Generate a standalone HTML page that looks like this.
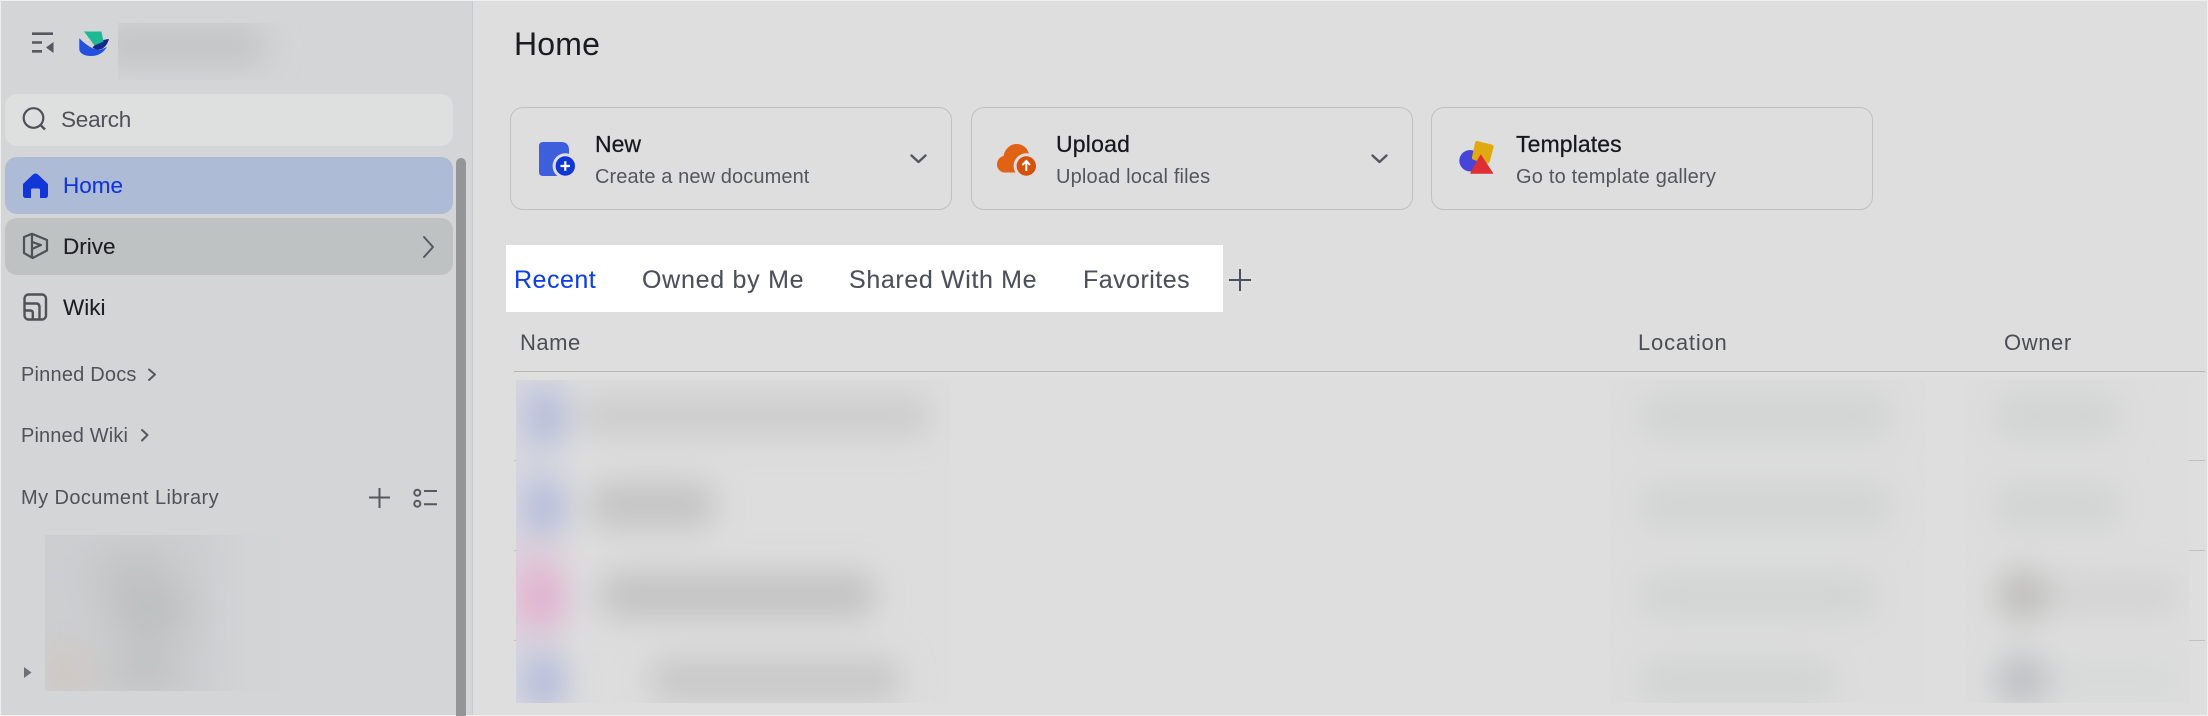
<!DOCTYPE html>
<html lang="en">
<head>
<meta charset="utf-8">
<title>Home</title>
<style>
html,body{margin:0;padding:0;width:2208px;height:716px;overflow:hidden;background:#dedede}
body{position:relative;font-family:"Liberation Sans",sans-serif}
div,span{position:absolute;box-sizing:border-box}
.t{white-space:nowrap;line-height:1}
.side{left:1px;top:1px;width:472px;height:714px;background:#d3d5d7;border-right:1px solid #c8cacc}
.box{left:5px;width:448px;border-radius:12px}
.nav{font-size:22.5px;color:#1c1e22;-webkit-text-stroke:.1px currentColor}
.small{font-size:20px;color:#4f5259}
.card{top:107px;height:103px;width:442px;border:1.5px solid #bfc0c1;border-radius:13px}
.ct{font-size:23px;color:#17181b;-webkit-text-stroke:.25px currentColor}
.cs{font-size:20px;color:#53565c}
.tab{top:268px;font-size:25px;color:#4b505b;-webkit-text-stroke:.1px currentColor}
.th{top:332px;font-size:22px;color:#4b4e55}
.sep{height:1px;background:#c0c1c2}
svg{position:absolute;left:0;top:0}
</style>
</head>
<body>
<div class="side"></div>
<div style="left:0;top:0;width:2208px;height:1px;background:#efefef"></div>
<div style="left:0;top:715px;width:2208px;height:1px;background:#efefef"></div>
<div style="left:0;top:0;width:1px;height:716px;background:#efefef"></div>
<div style="left:2207px;top:0;width:1px;height:716px;background:#efefef"></div>

<div class="box" style="top:94px;height:52px;background:#dedfdf"></div>
<div class="box" style="top:157px;height:57px;background:#aebbd6"></div>
<div class="box" style="top:218px;height:57px;background:#bec2c2"></div>
<div style="left:456px;top:158px;width:10px;height:558px;background:#949596;border-radius:5px 5px 0 0"></div>

<div style="left:506px;top:245px;width:717px;height:67px;background:#fff"></div>

<div class="card" style="left:510px"></div>
<div class="card" style="left:971px"></div>
<div class="card" style="left:1431px"></div>

<div class="sep" style="left:514px;top:371px;width:1691px;background:#b5b6b7"></div>
<div class="sep" style="left:514px;top:460px;width:2px"></div>
<div class="sep" style="left:514px;top:550px;width:2px"></div>
<div class="sep" style="left:514px;top:640px;width:2px"></div>

<svg width="2208" height="716" viewBox="0 0 2208 716" xmlns="http://www.w3.org/2000/svg">
<defs>
<filter id="b" x="-40%" y="-60%" width="180%" height="220%"><feGaussianBlur stdDeviation="18"/></filter>
<filter id="b2" x="-40%" y="-80%" width="180%" height="260%"><feGaussianBlur stdDeviation="16"/></filter>
<clipPath id="c1"><rect x="516" y="380" width="434" height="323"/></clipPath>
<clipPath id="c2"><rect x="1610" y="380" width="315" height="323"/></clipPath>
<clipPath id="c3"><rect x="1965" y="380" width="224" height="323"/></clipPath>
<clipPath id="c4"><rect x="118" y="23" width="200" height="57"/></clipPath>
<clipPath id="c5"><rect x="45" y="535" width="235" height="156"/></clipPath>
</defs>

<!-- blurred name column -->
<g clip-path="url(#c1)">
<rect x="516" y="380" width="434" height="323" fill="#dddddd"/>
<g filter="url(#b2)">
<rect x="490" y="360" width="70" height="360" fill="#d6d7df"/>
<rect x="580" y="396" width="350" height="40" rx="14" fill="#cccccc"/>
<rect x="590" y="482" width="125" height="46" rx="16" fill="#c4c4c4"/>
<rect x="600" y="572" width="275" height="46" rx="16" fill="#c3c3c3"/>
<rect x="650" y="658" width="250" height="44" rx="14" fill="#c8c8c8"/>
<rect x="490" y="545" width="70" height="90" fill="#e0ccd8"/>
<ellipse cx="546" cy="417" rx="20" ry="30" fill="#b0b9db"/>
<ellipse cx="545" cy="507" rx="20" ry="30" fill="#b0b9db"/>
<ellipse cx="544" cy="597" rx="21" ry="32" fill="#e2add0"/>
<ellipse cx="545" cy="682" rx="20" ry="30" fill="#b0b9db"/>
</g>
</g>
<!-- blurred location column -->
<g clip-path="url(#c2)">
<rect x="1610" y="380" width="315" height="323" fill="#dddddd"/>
<g filter="url(#b2)">
<rect x="1640" y="394" width="250" height="44" rx="14" fill="#d2d3d3"/>
<rect x="1640" y="484" width="250" height="44" rx="14" fill="#d2d3d3"/>
<rect x="1640" y="574" width="235" height="44" rx="14" fill="#d2d3d3"/>
<rect x="1640" y="660" width="195" height="44" rx="14" fill="#d2d3d3"/>
</g>
</g>
<!-- blurred owner column -->
<g clip-path="url(#c3)">
<rect x="1965" y="380" width="224" height="323" fill="#dddddd"/>
<g filter="url(#b2)">
<rect x="1995" y="394" width="125" height="44" rx="14" fill="#d2d3d3"/>
<rect x="1995" y="484" width="125" height="44" rx="14" fill="#d2d3d3"/>
<rect x="2045" y="574" width="135" height="42" rx="14" fill="#d4d4d4"/>
<rect x="2045" y="660" width="135" height="42" rx="14" fill="#d8d9d9"/>
<circle cx="2023" cy="595" r="26" fill="#bebdbb"/>
<circle cx="2022" cy="680" r="26" fill="#bcbfc2"/>
</g>
</g>
<!-- blurred sidebar title -->
<g clip-path="url(#c4)">
<rect x="118" y="23" width="200" height="57" fill="#d3d5d7"/>
<g filter="url(#b2)">
<rect x="100" y="26" width="165" height="40" rx="10" fill="#c2c4c5"/>
</g>
</g>
<!-- blurred sidebar tree -->
<g clip-path="url(#c5)">
<rect x="45" y="535" width="235" height="156" fill="#d2d5d6"/>
<g filter="url(#b)">
<rect x="20" y="510" width="205" height="210" fill="#ccced0"/>
<ellipse cx="135" cy="575" rx="45" ry="30" fill="#c2c5c5"/>
<ellipse cx="150" cy="612" rx="45" ry="26" fill="#bdc0c0"/>
<ellipse cx="145" cy="668" rx="38" ry="26" fill="#c0c3c3"/>
<ellipse cx="65" cy="672" rx="30" ry="28" fill="#d0c8c2"/>
</g>
</g>

<!-- menu icon -->
<g fill="none" stroke="#55585e" stroke-width="2.600">
<path d="M32 33.700H53M32 42.500H42M32 51.300H42"/>
</g>
<path d="M46 47.500 L53.500 42 V53 Z" fill="#55585e"/>
<!-- logo -->
<path d="M79.300 38.300 C84 43 88 46 93 48.500 L100 50 L107 47 C103 53 98 56 91 56 C84 56 79.300 53 79.300 49 Z" fill="#2450e0"/>
<path d="M92.500 47.500 C96 43 102 39.500 109 39 C107.500 44 104.500 48.500 100 49.500 C97 50 94.500 49 92.500 47.500Z" fill="#13288a"/>
<path d="M84 31.500 L101.500 31.500 L103.500 41.500 L94.500 45.500 Z" fill="#1db894"/>
<!-- search -->
<circle cx="33.500" cy="118" r="9.800" fill="none" stroke="#4e5158" stroke-width="2.200"/>
<path d="M40.500 125 L45 129.500" stroke="#4e5158" stroke-width="2.400" fill="none"/>
<!-- home -->
<path d="M23 184 L33 174.500 Q35.500 172.500 38 174.500 L48 184 V195 Q48 198 45 198 H40 V190 Q40 188.500 38.500 188.500 H32.500 Q31 188.500 31 190 V198 H26 Q23 198 23 195 Z" fill="#1035d8"/>
<!-- drive -->
<g fill="none" stroke="#4e5257" stroke-width="2.200" stroke-linejoin="round">
<path d="M24 237 L32 233.800 L47 240 V250.500 L32.700 258 L24 253 Z"/>
<path d="M32 234 V258"/>
<path d="M32 242 L41 245 L32 249"/>
</g>
<!-- wiki -->
<g fill="none" stroke="#4e5257" stroke-width="2.400" stroke-linejoin="round">
<rect x="24.500" y="294.500" width="21.500" height="25" rx="4"/>
<path d="M25 303.500 H36 Q39.500 303.500 39.500 307 V319"/>
<path d="M25 310.500 H30 Q32.800 310.500 32.800 313 V319"/>
</g>
<!-- chevrons -->
<g fill="none" stroke="#55585e" stroke-width="2" stroke-linecap="round" stroke-linejoin="round">
<path d="M424 237 L433 247 L424 257"/>
<path d="M149 369.500 L155 374.500 L149 380"/>
<path d="M142 430 L147.500 435 L142 440.500"/>
<path d="M369 497.500 H390 M379.500 488 V508" stroke-linecap="butt"/>
<circle cx="417.300" cy="492.700" r="3"/>
<circle cx="417.300" cy="503.700" r="3"/>
<path d="M424 491 H437 M424 504.300 H437" stroke-linecap="butt"/>
<path d="M911.500 155.500 L918.500 162 L925.500 155.500" stroke-width="2.400"/>
<path d="M1372.500 155.500 L1379.500 162 L1386.500 155.500" stroke-width="2.400"/>
<path d="M1229 280 H1251 M1240 269 V291" stroke-linecap="butt" stroke="#4b505b"/>
</g>
<path d="M24 667 L31.500 672.500 L24 678 Z" fill="#6d7078"/>

<!-- New icon -->
<path d="M539 146 Q539 142 543 142 H561 Q569 142 569 150 V172 Q569 176 565 176 H543 Q539 176 539 172 Z" fill="#3e5fdb"/>
<circle cx="565.300" cy="166" r="12.700" fill="#dedede"/>
<circle cx="565.300" cy="166" r="9.700" fill="#1036d4"/>
<path d="M560.500 166 H570 M565.300 161.300 V170.700" stroke="#fff" stroke-width="2.200"/>
<!-- Upload icon -->
<path d="M1005 172.500 C1000 172.500 997 168.500 997 164.500 C997 160 1000 156.800 1003.500 156 C1005 149 1010 144 1016.500 144 C1023 144 1027.500 148 1029 154 L1029 172.500 Z" fill="#e06214"/>
<circle cx="1026.300" cy="166" r="12.700" fill="#dedede"/>
<circle cx="1026.300" cy="166" r="9.700" fill="#d4520d"/>
<path d="M1026.300 171 V161.500 M1022.500 165 L1026.300 161 L1030 165" stroke="#fff" stroke-width="2" fill="none"/>
<!-- Templates icon -->
<circle cx="1470" cy="160.700" r="10.700" fill="#4545db"/>
<path d="M1477 141 L1491.500 144.500 Q1494 145 1493.500 147.500 L1489.800 161.500 Q1489 164 1486.500 163.500 L1474 160 Q1471.500 159.300 1472 157 L1475 143 Q1475.500 140.800 1477 141 Z" fill="#e0a910"/>
<path d="M1480.700 155 L1492.700 173.300 H1470.700 Z" fill="#dd2e34" stroke="#dd2e34" stroke-width="1" stroke-linejoin="round"/>
</svg>

<span class="t" style="left:61px;top:109px;font-size:22.500px;letter-spacing:-.2px;color:#4e5158">Search</span>
<span class="t nav" style="left:63px;top:175px;color:#1035d8">Home</span>
<span class="t nav" style="left:63px;top:236px">Drive</span>
<span class="t nav" style="left:63px;top:297px">Wiki</span>
<span class="t small" style="left:21px;top:365px;letter-spacing:.2px">Pinned Docs</span>
<span class="t small" style="left:21px;top:426px;letter-spacing:.13px">Pinned Wiki</span>
<span class="t small" style="left:21px;top:488px;letter-spacing:.42px">My Document Library</span>

<span class="t" style="left:514px;top:27.500px;font-size:32px;letter-spacing:.2px;color:#1b1c1f">Home</span>

<span class="t ct" style="left:595px;top:133px">New</span>
<span class="t cs" style="left:595px;top:167px;letter-spacing:.1px">Create a new document</span>
<span class="t ct" style="left:1056px;top:133px;letter-spacing:.2px">Upload</span>
<span class="t cs" style="left:1056px;top:167px;letter-spacing:.17px">Upload local files</span>
<span class="t ct" style="left:1516px;top:133px;letter-spacing:.1px">Templates</span>
<span class="t cs" style="left:1516px;top:167px;letter-spacing:.2px">Go to template gallery</span>

<span class="t tab" style="left:514px;color:#0f3fe8;letter-spacing:.5px">Recent</span>
<span class="t tab" style="left:642px;letter-spacing:.73px">Owned by Me</span>
<span class="t tab" style="left:849px;letter-spacing:.64px">Shared With Me</span>
<span class="t tab" style="left:1083px;letter-spacing:.47px">Favorites</span>

<span class="t th" style="left:520px;letter-spacing:.5px">Name</span>
<span class="t th" style="left:1638px;letter-spacing:.8px">Location</span>
<span class="t th" style="left:2004px;letter-spacing:.6px">Owner</span>

<div class="sep" style="left:2189px;top:460px;width:16px"></div>
<div class="sep" style="left:2189px;top:550px;width:16px"></div>
<div class="sep" style="left:2189px;top:640px;width:16px"></div>
</body>
</html>
